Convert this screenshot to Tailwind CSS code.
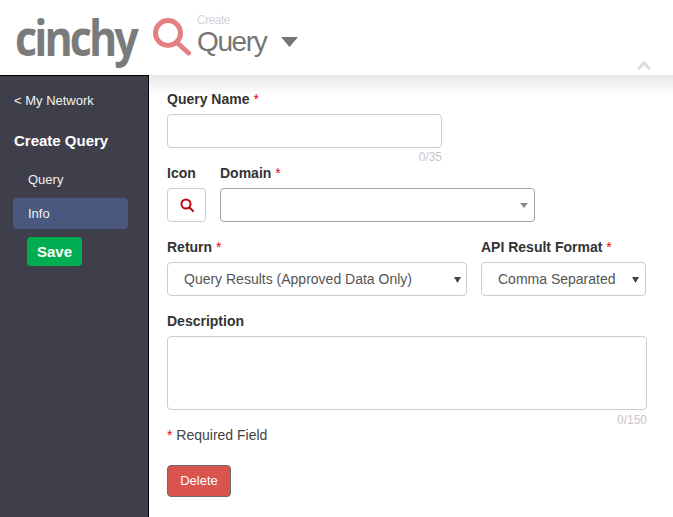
<!DOCTYPE html>
<html lang="en">
<head>
<meta charset="UTF-8">
<title>Create Query</title>
<script src="https://cdn.jsdelivr.net/npm/@tailwindcss/browser@4"></script>
</head>
<body class="bg-white font-['Liberation_Sans',Arial,sans-serif] w-[673px] h-[517px] overflow-hidden">
  <!-- header -->
  <header class="relative h-[75px] flex items-start bg-white">
    <div class="ml-[15px] w-[123px] shrink-0">
      <span class="block origin-left scale-x-[0.845] mt-[1px] font-['Open_Sans',sans-serif] text-[51px] leading-[70px] font-bold tracking-[-3.5px] text-[#7b7b7b]">cinchy</span>
    </div>
    <svg class="ml-[15px] mt-[18px]" width="38" height="38" viewBox="0 0 38 38" fill="none" stroke="#e38083" stroke-width="5" stroke-linecap="round"><circle cx="15" cy="15" r="12.500"/><path d="M24.500 25l11 10"/></svg>
    <div class="ml-[6px] mt-[14px] flex flex-col">
      <span class="text-[12px] leading-[13px] text-[#d4d4d4] tracking-[-0.5px]">Create</span>
      <span class="text-[28px] leading-[30px] text-[#757575] tracking-[-1.4px]">Query</span>
    </div>
    <svg class="ml-[15px] mt-[37px]" width="17" height="10" viewBox="0 0 17 10"><path d="M0 0h17l-8.500 10z" fill="#757575"/></svg>
    <svg class="absolute left-[637px] top-[61px]" width="14" height="9" viewBox="0 0 14 9" fill="none" stroke="#dcdcdc" stroke-width="3"><path d="M1 8l6-6 6 6"/></svg>
  </header>

  <div class="flex h-[442px]">
    <!-- sidebar -->
    <aside class="w-[149px] shrink-0 bg-[#3e3f4b] border-t border-r border-black text-white flex flex-col">
      <a class="ml-[14px] mt-[17px] text-[13px] leading-[16px] text-[#f2f2f2]">&lt; My Network</a>
      <h2 class="ml-[14px] mt-[22px] text-[15px] leading-[20px] font-bold">Create Query</h2>
      <a class="ml-[28px] mt-[21px] text-[13px] leading-[16px] text-[#f2f2f2]">Query</a>
      <a class="ml-[13px] mt-[10px] w-[115px] h-[31px] rounded-[4px] bg-[#4a5880] pl-[15px] text-[13px] leading-[31px] text-[#f2f2f2]">Info</a>
      <button class="ml-[27px] mt-[8px] w-[55px] h-[29px] pt-[2px] rounded-[4px] bg-[#00ad50] text-[15px] font-bold text-white">Save</button>
    </aside>

    <!-- form -->
    <main class="relative flex-1 pl-[18px] pr-[26px] text-[#333333]">
      <div class="absolute left-0 right-0 top-0 h-[20px] bg-gradient-to-b from-[#e9e9e9] to-white"></div>
      <div class="relative">
        <label class="block mt-[16px] text-[14px] leading-[17px] font-bold">Query Name <span class="text-[#e8001c] font-normal">*</span></label>
        <input class="block mt-[6px] w-[275px] h-[34px] bg-white border border-[#cccccc] rounded-[4px]">
        <p class="w-[275px] text-right text-[12px] leading-[14px] mt-[2px] text-[#c8c8c8]">0/35</p>

        <div class="flex gap-[14px] mt-[1px]">
          <div>
            <label class="block text-[14px] leading-[17px] font-bold">Icon</label>
            <div class="mt-[6px] w-[39px] h-[34px] bg-white border border-[#cccccc] rounded-[4px] flex items-center justify-center">
              <svg width="14" height="14" viewBox="0 0 14 14" fill="none" stroke="#b90a14" stroke-width="2" stroke-linecap="round"><circle cx="6" cy="6" r="4.500"/><path d="M9.500 9.500l3.500 3.500"/></svg>
            </div>
          </div>
          <div>
            <label class="block text-[14px] leading-[17px] font-bold">Domain <span class="text-[#e8001c] font-normal">*</span></label>
            <div class="mt-[6px] w-[315px] h-[34px] bg-white border border-[#a3a3a3] rounded-[4px] flex items-center justify-end pr-[6px]">
              <svg width="8" height="5" viewBox="0 0 8 5"><path d="M0 0h8l-4 5z" fill="#8c8c8c"/></svg>
            </div>
          </div>
        </div>

        <div class="flex gap-[14px] mt-[17px]">
          <div>
            <label class="block text-[14px] leading-[17px] font-bold">Return <span class="text-[#e8001c] font-normal">*</span></label>
            <div class="mt-[6px] w-[300px] h-[34px] bg-white border border-[#cccccc] rounded-[4px] flex items-center justify-between pl-[16px] pr-[5px] text-[14px] text-[#555555]">
              <span>Query Results (Approved Data Only)</span>
              <svg width="7" height="7" viewBox="0 0 7 7"><path d="M0 1h7l-3.500 6z" fill="#444444"/></svg>
            </div>
          </div>
          <div>
            <label class="block text-[14px] leading-[17px] font-bold">API Result Format <span class="text-[#e8001c] font-normal">*</span></label>
            <div class="mt-[6px] w-[165px] h-[34px] bg-white border border-[#cccccc] rounded-[4px] flex items-center justify-between pl-[16px] pr-[6px] text-[14px] text-[#555555]">
              <span>Comma Separated</span>
              <svg width="7" height="7" viewBox="0 0 7 7"><path d="M0 1h7l-3.500 6z" fill="#444444"/></svg>
            </div>
          </div>
        </div>

        <label class="block mt-[17px] text-[14px] leading-[17px] font-bold">Description</label>
        <textarea class="block mt-[6px] w-[480px] h-[74px] bg-white border border-[#cccccc] rounded-[4px] resize-none"></textarea>
        <p class="w-[480px] text-right text-[12px] leading-[14px] mt-[3px] text-[#c8c8c8]">0/150</p>

        <p class="mt-0 text-[14px] leading-[17px] text-[#444444]"><span class="text-[#e8001c]">*</span> Required Field</p>
        <button class="block mt-[21px] w-[64px] h-[32px] bg-[#d9534f] border border-[#6b6b6b] rounded-[4px] text-[13px] text-white">Delete</button>
      </div>
    </main>
  </div>
</body>
</html>
